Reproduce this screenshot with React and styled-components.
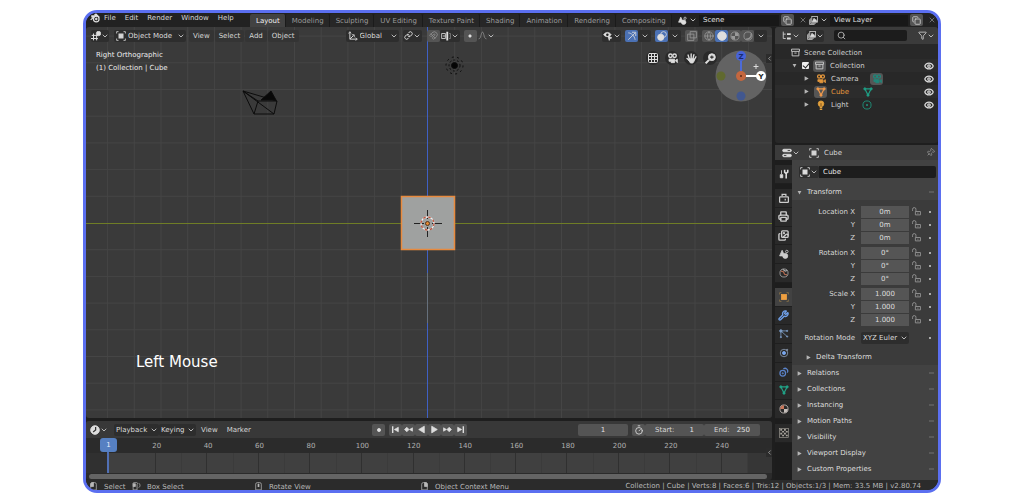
import React from 'react';
import styled, { createGlobalStyle, css } from 'styled-components';
import {
  ChevronDown, ChevronLeft, Search, Filter, Eye, Pin, Wrench, Globe,
  Grid3x3, Link, Magnet, Copy, X, Printer, Images, Timer,
} from 'lucide-react';

const Global = createGlobalStyle`
  * { box-sizing: border-box; }
  body { margin: 0; background: #fff; }
  body, button, input, select {
    font-family: "DejaVu Sans", "Liberation Sans", sans-serif;
    font-size: 7px;
    line-height: 12px;
    color: #d6d6d6;
  }
  button, input, select {
    border: 0; margin: 0; padding: 0; background: none; border-radius: 0;
    appearance: none; outline: none;
  }
  h2, ul { margin: 0; padding: 0; font: inherit; list-style: none; }
  svg { display: block; flex: none; }
`;

/* ---------- icons ---------- */

const shapes = {
  blender: <><path d="M1 11l6-5H3V4.500h7L8 2.500 9.500 1.500 15 7" strokeWidth="2" /><circle cx="10" cy="9.500" r="4.500" strokeWidth="2" /><circle cx="10" cy="9.500" r="1.500" fill="currentColor" /></>,
  view3d: <><path d="M1 7h10M0 12h11M4 4v11M9 7v8" strokeWidth="1.600" /><circle cx="12" cy="4" r="3.500" fill="currentColor" /></>,
  object: <><rect x="5" y="5" width="6" height="6" fill="currentColor" strokeWidth="2" /><path d="M1 4V1h3M12 1h3v3M15 12v3h-3M4 15H1v-3" /></>,
  axes: <><path d="M3 2v11h11M3 13l6-6" strokeWidth="1.600" /><path d="M1 4l2-3 2 3M12 11l3 2-3 2M6 6h4v4" /></>,
  snap: <><path d="M1 4h6v8H1zM3 8h4" /><path d="M10 1v14" strokeWidth="3" /><path d="M13 4h2v8h-2" opacity=".5" /></>,
  dot: <circle cx="8" cy="8" r="2.500" fill="currentColor" />,
  curve: <path d="M1 14c5 0 4-12 7-12s2 12 7 12" />,
  visibility: <><path d="M1 6c3-5 9-5 12 0-3 4-9 4-12 0z" fill="currentColor" /><circle cx="7" cy="6" r="2" fill="#222" stroke="none" /><path d="M8 8l2 7 1-3 3-1z" fill="currentColor" /></>,
  gizmo: <><path d="M2 14L13 3M8 2h6v6" /><path d="M2 3c5 0 10 5 11 11" /></>,
  overlay: <><circle cx="6" cy="10" r="5" fill="currentColor" /><circle cx="10.500" cy="5.500" r="4.500" /></>,
  xray: <><path d="M1 5h10v10H1z" /><path d="M5 1h10v10H5z" /></>,
  solid: <circle cx="8" cy="8" r="7" fill="currentColor" />,
  material: <><circle cx="8" cy="8" r="6.500" /><path d="M8 2v6h6a6 6 0 00-6-6zM2 8h6v6a6 6 0 01-6-6z" fill="currentColor" stroke="none" /></>,
  rendered: <><circle cx="8" cy="8" r="6.500" /><path d="M13 4c1 6-3 9-8 9" strokeWidth="2" /></>,
  camera: <><circle cx="5" cy="4" r="2.500" strokeWidth="2" /><circle cx="11" cy="4" r="2.500" strokeWidth="2" /><path d="M3 9h8v5H6v-2H3zM12 11l3-2v5z" fill="currentColor" /></>,
  hand: <><path d="M5 9L3 3M7.500 8V1.500M10 8.500L11.500 2.500M12 10l2.500-4.500M5 11L1.500 8" strokeWidth="2" strokeLinecap="round" /><path d="M4.500 8.500h7.500v3l-2 3H6.500l-2.500-4z" fill="currentColor" /></>,
  zoom: <><circle cx="10" cy="6" r="5" fill="currentColor" /><path d="M6 10l-5 5" strokeWidth="3" /><path d="M10 3.500v5M7.500 6h5" stroke="#2a2a2a" strokeWidth="1.600" /></>,
  unlocked: <><path d="M1 7V4a3 3 0 016 0v4" strokeWidth="1.600" /><path d="M6 8h9v6H6zM10.500 10v2" strokeWidth="1.600" /></>,
  scene: <><path d="M5 2l4 9H1z" fill="currentColor" /><circle cx="10" cy="11" r="4" fill="currentColor" /><circle cx="12.500" cy="4" r="2" /></>,
  layers: <><path d="M1 6v9h9M3 4v9h9" /><rect x="5" y="1" width="10" height="10" /><path d="M6 10l3-6 2 3 1-1 2 4z" fill="currentColor" /></>,
  tree: <><path d="M2 1v11h4M2 5h4" /><path d="M8 5h6M8 12h6" strokeWidth="3" /></>,
  collection: <><path d="M1 2h14v4H1zM2 6v8h12V6M6 9h4" strokeWidth="1.600" /></>,
  props: <><rect x="1" y="2" width="14" height="4" rx="2" fill="currentColor" /><rect x="1" y="10" width="14" height="4" rx="2" fill="currentColor" /><path d="M9 4h4M3 12h4" stroke="#333" /></>,
  mesh: <><path d="M3 3h10L8 13z" strokeWidth="1.800" /><g fill="currentColor"><circle cx="3" cy="3" r="1.800" /><circle cx="13" cy="3" r="1.800" /><circle cx="8" cy="13" r="1.800" /></g></>,
  bulb: <><circle cx="8" cy="6" r="4.500" fill="currentColor" /><path d="M6 12h4M6 15h4" strokeWidth="2" /><path d="M8 5v5" stroke="#6b4415" /></>,
  lightData: <><circle cx="8" cy="8" r="6.500" /><circle cx="8" cy="8" r="1" fill="currentColor" /></>,
  tool: <><path d="M4 2v6M2 9h4v5H2z" fill="currentColor" /><path d="M9 1v4l2 2 3-2V1M11.500 7v8" strokeWidth="2.500" /></>,
  render: <><rect x="1" y="6" width="14" height="9" rx="1" strokeWidth="2" /><path d="M5 5V2h6v3M10 9v3" strokeWidth="2" /></>,
  world: <><circle cx="8" cy="8" r="6.500" /><path d="M3 5l4 1 2 4 4 1" stroke="#b06a50" strokeWidth="2" /><path d="M6 2l4 3 3-1" strokeWidth="2" /></>,
  objectTab: <><rect x="4" y="4" width="8" height="8" fill="#f0a040" stroke="#f0a040" /><path d="M1 4V1h3M12 1h3v3M15 12v3h-3M4 15H1v-3" stroke="#8c7448" /></>,
  particles: <><path d="M3 3l10 9M3 3h10M3 3v10" /><g fill="currentColor"><circle cx="3" cy="3" r="2" /><circle cx="13" cy="3" r="1" /><circle cx="3" cy="13" r="1" /><circle cx="13" cy="12" r="1" /></g></>,
  physics: <><circle cx="8" cy="8" r="6" /><circle cx="8" cy="8" r="2.500" fill="#7aa7ee" stroke="#7aa7ee" /><circle cx="13" cy="3" r="1" fill="currentColor" /></>,
  constraint: <><circle cx="6" cy="10" r="4.500" strokeWidth="2" /><circle cx="6" cy="10" r="1" fill="currentColor" /><path d="M7 3c4-3 9 2 6 6" strokeWidth="2" /></>,
  matTab: <><circle cx="8" cy="8" r="6.500" /><path d="M8 8h6a6 6 0 01-6 6z" fill="currentColor" stroke="none" /><path d="M8 2v6H2a6 6 0 016-6z" fill="#c9775b" stroke="none" /></>,
  texture: <><rect x="1" y="1" width="14" height="14" strokeWidth="1" /><path d="M2 3h12M2 9h12" strokeWidth="2.500" strokeDasharray="3 3" /><path d="M5 6h9M5 12h9" strokeWidth="2.500" strokeDasharray="3 3" /></>,
  clock: <><circle cx="8" cy="8" r="7" fill="currentColor" /><path d="M9 3v5l-4 3" stroke="#333" strokeWidth="2" /></>,
  first: <><path d="M3 2v12" strokeWidth="2.500" /><path d="M13 4v8L6 8z" fill="currentColor" /></>,
  prevKey: <path d="M5 4l4 4-4 4-4-4zM15 5v6l-5-3z" fill="currentColor" />,
  back: <path d="M13 2v12L3 8z" fill="currentColor" />,
  play: <path d="M3 2v12l10-6z" fill="currentColor" />,
  nextKey: <path d="M11 4l4 4-4 4-4-4zM1 5v6l5-3z" fill="currentColor" />,
  last: <><path d="M13 2v12" strokeWidth="2.500" /><path d="M3 4v8l7-4z" fill="currentColor" /></>,
  mouseL: <><path d="M3 14V4a3 3 0 013-3h4a3 3 0 013 3v10z" /><path d="M3 8V4a3 3 0 013-3h2v7z" fill="currentColor" /></>,
  mouseM: <><path d="M3 14V4a3 3 0 013-3h4a3 3 0 013 3v10z" /><path d="M8 3v6" strokeWidth="3" /></>,
  mouseR: <><path d="M3 14V4a3 3 0 013-3h4a3 3 0 013 3v10z" /><path d="M8 1h2a3 3 0 013 3v4H8z" fill="currentColor" /></>,
  drag: <><path d="M2 14V4a2 2 0 012-3h2a2 2 0 013 3v10z" /><path d="M2 8V3h4v5z" fill="currentColor" /><path d="M12 2c3 2 3 6 0 8" /></>,
  opened: <path d="M2 3h12l-6 11z" fill="currentColor" stroke="none" />,
  closed: <path d="M2 1v14l13-7z" fill="currentColor" stroke="none" />,
};

const Glyph = ({ name, size = 10, color = 'currentColor' }) => (
  <svg width={size} height={size} viewBox="0 0 16 16" fill="none" stroke="currentColor"
    strokeWidth="1.3" color={color} aria-hidden="true">{shapes[name]}</svg>
);
const Chevron = () => <ChevronDown size={8} strokeWidth={3} color="#b8b8b8" />;

/* ---------- shell ---------- */

const Page = styled.main`
  min-height: 100vh;
  padding: 10px 83px;
  display: flex;
`;
const Frame = styled.div`
  flex: 1;
  min-width: 0;
  display: flex;
  flex-direction: column;
  border: 3px solid #5b6ff0;
  border-radius: 14px;
  background: #1e1e1e;
  overflow: hidden;
`;
const Row = styled.div`
  display: flex;
  align-items: center;
  gap: ${(p) => p.$gap || 0}px;
  margin-left: ${(p) => (p.$end ? 'auto' : `${p.$before || 0}px`)};
`;
const TopBar = styled.header`
  display: flex;
  height: 14px;
  padding-left: 4px;
  background: #222;
  white-space: nowrap;
`;
const MenuBar = styled.nav`
  display: flex;
  align-items: center;
  flex: none;
  width: 160px;
  height: 10px;
  gap: 4px;
`;
const MenuButton = styled.button`
  flex: none;
  white-space: nowrap;
  color: #d6d6d6;
  ${(p) => p.$boxed && css`
    padding: 0 4px;
    border-radius: 2px;
    background: #343434;
  `}
`;
const Tabs = styled.div`
  display: flex;
  align-items: stretch;
  padding-top: 1px;
`;
const Tab = styled.button`
  padding: 0 5px 0 6px;
  border-right: 1px solid #1b1b1b;
  border-radius: 2px 2px 0 0;
  background: ${(p) => (p.$active ? '#424242' : '#272727')};
  color: ${(p) => (p.$active ? '#f0f0f0' : '#9b9b9b')};
`;
const DataPicker = styled.div`
  display: flex;
  align-items: center;
  height: 10px;
  gap: 2px;
  width: ${(p) => p.$width}px;
`;
const DataName = styled.input`
  flex: 1;
  min-width: 0;
  height: 11px;
  padding-left: 4px;
  background: #181818;
  color: #e0e0e0;
`;
const IconButton = styled.button`
  display: flex;
  align-items: center;
  justify-content: center;
  height: 12px;
  min-width: ${(p) => p.$width || 13}px;
  border-radius: 2px;
  color: ${(p) => (p.$dim ? '#999' : '#dedede')};
  background: ${(p) => ({ on: '#4b71b4', raised: '#545454', dark: '#2e2e2e' }[p.$tone] || 'transparent')};
`;
const Body = styled.div`
  flex: 1;
  display: flex;
  gap: 3px;
`;
const Work = styled.div`
  flex: 1;
  min-width: 0;
  display: flex;
  flex-direction: column;
  gap: 3px;
`;
const Side = styled.aside`
  width: 163px;
  display: flex;
  flex-direction: column;
  gap: 2px;
`;

/* ---------- 3D viewport ---------- */

const Viewport = styled.section`
  position: relative;
  flex: 1;
  min-height: 300px;
  background: #3a3a3a;
  border-radius: 3px;
  overflow: hidden;
`;
const Scene = styled.svg`
  position: absolute;
  inset: 0;
  width: 100%;
  height: 100%;
`;
const ViewHeader = styled.div`
  position: relative;
  display: flex;
  align-items: center;
  height: 17px;
  padding: 0 5px;
  white-space: nowrap;
`;
const PickerBox = styled.label`
  display: flex;
  align-items: center;
  gap: ${(p) => p.$gap}px;
  width: ${(p) => p.$width}px;
  height: 12px;
  padding: 0 1px 0 2px;
  border-radius: 2px;
  background: #2d2d2d;
`;
const PickerSelect = styled.select`
  flex: 1;
  min-width: 0;
  height: 12px;
  color: #dcdcdc;
`;
const ViewInfo = styled.div`
  position: relative;
  padding: 5px 10px;
  line-height: 13px;
  color: #ececec;
`;
const NavTools = styled.div`
  position: absolute;
  top: 24px;
  right: 55px;
  display: flex;
  gap: 5px;
`;
const NavButton = styled.button`
  display: flex;
  align-items: center;
  justify-content: center;
  width: 14px;
  height: 14px;
  border-radius: 50%;
  background: #2a2a2a;
  color: #ddd;
`;
const BallHolder = styled.div`
  position: absolute;
  top: 23px;
  right: 5px;
`;
const KeyHint = styled.div`
  position: absolute;
  left: 50px;
  bottom: 46px;
  font-size: 15px;
  line-height: 20px;
  color: #fff;
`;
const EdgeHandle = styled.button`
  position: absolute;
  right: 0;
  top: ${(p) => p.$top}px;
  width: 6px;
  height: 9px;
  background: #2c2c2c;
  display: flex;
  align-items: center;
`;

const steps = Array.from({ length: 27 }, (_, i) => (i - 13) * 26.7).filter((v) => v !== 0);

const ViewportScene = () => (
  <Scene viewBox="-342 -196 686 391" preserveAspectRatio="xMidYMid slice" fill="none">
    <g stroke="#454545">
      {steps.map((x) => <path key={x} d={`M${x} -400V400`} />)}
      {steps.map((y) => <path key={y} d={`M-700 ${y}H700`} />)}
    </g>
    <path d="M-700 .5H700" stroke="#6f7d26" />
    <path d="M-.5 -400V400" stroke="#3f60c4" />
    <path d="M-.5 50V100" stroke="#66707c" />
    <rect x="-26.500" y="-26.500" width="53" height="53" fill="#9fa1a0" stroke="#e88a3e" strokeWidth="1.500" />
    <path d="M-14 .5H-4M4 .5H14M-.5 -13V-4M-.5 4V14" stroke="#222" />
    <circle cx="-.5" cy=".5" r="6.500" stroke="#eee" strokeWidth="1.300" />
    <circle cx="-.5" cy=".5" r="6.500" stroke="#c0533c" strokeWidth="1.300" strokeDasharray="2.500 2.600" />
    <circle cx="-.5" cy=".5" r="2" fill="#e58a35" stroke="#54351c" />
    <g stroke="#0c0c0c">
      <path d="M-185 -132L-174 -109H-154L-151 -122H-170L-174 -109M-185 -132L-170 -122M-185 -132L-154 -109M-185 -132L-151 -122" />
      <path d="M-167 -123H-152L-157 -132Z" fill="#080808" />
      <circle cx="26.500" cy="-157.500" r="3" fill="#050505" />
      <circle cx="26.500" cy="-157.500" r="5.500" strokeDasharray="2 2" />
      <circle cx="26.500" cy="-157.500" r="8.500" strokeDasharray="2 3.300" />
    </g>
  </Scene>
);

const AxisBall = () => (
  <svg width="52" height="52" viewBox="-26 -26 52 52" role="img" aria-label="View axes">
    <circle r="25.500" fill="#636363" />
    <path d="M0 -15V0" stroke="#4d6bd6" strokeWidth="2" />
    <path d="M5 0H16" stroke="#fff" strokeWidth="2" />
    <circle cx="-20" r="4.500" fill="#60692f" />
    <circle cy="20" r="4.500" fill="#41578f" />
    <circle cy="-20" r="5" fill="#4763d8" />
    <circle r="5" fill="#c4673f" />
    <circle cx="20" r="5" fill="#fff" />
    <circle r="1" fill="#5a2a18" />
    <path d="M15 -12v5M12.500 -9.500h5" stroke="#ddd" />
    <g fontSize="7" fontWeight="bold" textAnchor="middle">
      <text y="-17" fill="#182a70">Z</text>
      <text x="20" y="3" fill="#222">Y</text>
    </g>
  </svg>
);

const Picker = ({ icon, label, value, width }) => (
  <PickerBox $width={width} $gap={icon ? 2 : 0}>
    {icon && <Glyph name={icon} size={10} />}
    <PickerSelect aria-label={label} defaultValue={value}><option>{value}</option></PickerSelect>
    <Chevron />
  </PickerBox>
);

/* ---------- timeline ---------- */

const Timeline = styled.section`
  position: relative;
  background: #2b2b2b;
  border-radius: 3px;
  overflow: hidden;
`;
const TimeHeader = styled.div`
  display: flex;
  align-items: center;
  height: 17px;
  padding: 0 12px 0 3px;
  background: #383838;
  white-space: nowrap;
`;
const TimeGrid = styled.div`
  display: grid;
  grid-template-columns: repeat(12, 1fr);
  padding: 0 24px 0 45px;
  height: ${(p) => p.$height}px;
  text-align: center;
  line-height: 17px;
  color: #b0b0b0;
  ${(p) => p.$track && css`
    background: linear-gradient(90deg, #303030 22px, #404040 22px calc(100% - 25px), #222 calc(100% - 25px) calc(100% - 24px), #363636 calc(100% - 24px));
  `}
`;
const Beat = styled.div`
  background: linear-gradient(90deg, transparent calc(50% - 1px), #303030 calc(50% - 1px) 50%, transparent 50%);
  border-right: 1px solid #3b3b3b;
`;
const Playhead = styled.div`
  position: absolute;
  left: 14px;
  top: 17px;
  width: 17px;
  height: 14px;
  border-radius: 3px;
  background: #5680c2;
  color: #e8eefc;
  text-align: center;
  line-height: 15px;
  &::after {
    content: '';
    position: absolute;
    left: 7px;
    top: 14px;
    width: 2px;
    height: 21px;
    background: #5170b5;
  }
`;
const ScrollBar = styled.div`
  height: 5px;
  margin: 1px 5px 1px 3px;
  border-radius: 3px;
  background: #646464;
`;
const NumberField = styled.label`
  display: flex;
  align-items: center;
  width: ${(p) => p.$width}px;
  height: 12px;
  padding: 0 10px;
  border-radius: 2px;
  background: #545454;
`;
const NumberInput = styled.input`
  flex: 1;
  min-width: 0;
  width: 100%;
  text-align: ${(p) => p.$align || 'right'};
  color: #e2e2e2;
`;

/* ---------- outliner ---------- */

const Outliner = styled.section`
  height: 116px;
  background: #282828;
  border-radius: 3px;
  overflow: hidden;
`;
const PanelHeader = styled.div`
  display: flex;
  align-items: center;
  gap: 6px;
  height: ${(p) => p.$height}px;
  padding: 0 3px 0 7px;
  background: #3b3b3b;
`;
const SearchBox = styled.label`
  display: flex;
  align-items: center;
  flex: 1;
  height: 11px;
  margin: 0 4px;
  padding: 0 3px;
  border-radius: 2px;
  background: #1c1c1c;
`;
const Tree = styled.ul`
  padding-top: 2px;
`;
const TreeRow = styled.li`
  display: flex;
  align-items: center;
  gap: 4px;
  height: 13px;
  padding: 0 3px 0 ${(p) => p.$indent}px;
  background: ${(p) => (p.$alt ? '#2c2c2c' : 'transparent')};
  color: ${(p) => (p.$selected ? '#e2963c' : '#cfcfcf')};
`;
const Twist = styled.button`
  display: flex;
  width: 6px;
  color: #b5b5b5;
`;
const IconPlate = styled.span`
  display: flex;
  align-items: center;
  justify-content: center;
  width: 13px;
  height: 12px;
  border-radius: 3px;
  background: ${(p) => (p.$lit ? '#555' : 'transparent')};
`;
const Check = styled.input`
  width: 7px;
  height: 7px;
  border-radius: 1px;
  background: #eee;
  position: relative;
  &:checked::after {
    content: '';
    position: absolute;
    left: 2px;
    top: 0;
    width: 3px;
    height: 5px;
    border: solid #222;
    border-width: 0 1px 1px 0;
    transform: rotate(40deg);
  }
`;
const Push = styled.div`
  margin-left: auto;
`;

/* ---------- properties ---------- */

const Properties = styled.section`
  flex: 1;
  display: flex;
  flex-direction: column;
  background: #383838;
`;
const PropsBody = styled.div`
  flex: 1;
  display: flex;
`;
const TabRail = styled.nav`
  width: 17px;
  padding-top: 5px;
  display: flex;
  flex-direction: column;
  gap: 5px;
  background: #1d1d1d;
`;
const RailGroup = styled.div`
  display: flex;
  flex-direction: column;
  height: ${(p) => p.$height}px;
`;
const RailTab = styled.button`
  flex: 1;
  display: flex;
  align-items: center;
  justify-content: center;
  background: ${(p) => (p.$active ? '#424242' : '#292929')};
  border-bottom: 1px solid #1f1f1f;
`;
const PropsMain = styled.div`
  flex: 1;
  min-width: 0;
  background: #424242;
`;
const NameRow = styled.div`
  display: flex;
  height: 24px;
  align-items: center;
  padding: 0 2px 0 7px;
`;
const NameInput = styled.input`
  flex: 1;
  min-width: 0;
  height: 12px;
  padding-left: 4px;
  border-radius: 0 2px 2px 0;
  background: #1d1d1d;
  color: #e6e6e6;
`;
const SectionHead = styled.h2`
  display: flex;
  align-items: center;
  height: 16px;
  padding: 0 4px 0 ${(p) => (p.$sub ? 14 : 5)}px;
  color: #dedede;
`;
const SectionToggle = styled.button`
  display: flex;
  align-items: center;
  gap: 4px;
  color: inherit;
`;
const Grip = styled.span`
  margin-left: auto;
  width: 5px;
  height: 2px;
  background: #5a5a5a;
`;
const PropPanel = styled.div`
  background: #3b3b3b;
  padding-top: 5px;
  display: flex;
  flex-direction: column;
  gap: 5px;
`;
const VectorList = styled.div`
  display: flex;
  flex-direction: column;
  gap: 2px;
`;
const PropRow = styled.div`
  display: grid;
  grid-template-columns: 1fr 48px 15px 12px;
  align-items: center;
  height: 13px;
  margin-right: 2px;
`;
const PropLabel = styled.label`
  text-align: right;
  padding-right: 6px;
  white-space: nowrap;
`;
const PropValue = styled.input`
  width: 100%;
  height: 12px;
  text-align: center;
  background: #555;
  color: #dedede;
`;
const Center = styled.span`
  display: flex;
  justify-content: center;
`;
const Dot = styled.span`
  justify-self: center;
  width: 2px;
  height: 2px;
  border-radius: 50%;
  background: #d0d0d0;
`;

const vectors = [
  ['Location', '0m'],
  ['Rotation', '0°'],
  ['Scale', '1.000'],
];
const rail = [
  [19, [['tool', '#ddd']]],
  [94, [['render', '#ccc'], ['printer', '#ccc'], ['images', '#ccc'], ['scene', '#ccc'], ['world', '#aaa']]],
  [131, [['objectTab', '#f0a040'], ['wrench', '#6f9fe8'], ['particles', '#7d9cc4'], ['physics', '#8d9bb0'], ['constraint', '#5b83c8'], ['mesh', '#22a387'], ['matTab', '#c8c0bc']]],
  [19, [['texture', '#a8a49c']]],
];
const railLucide = { printer: Printer, images: Images, wrench: Wrench };
const RailIcon = ({ name, color }) => {
  const L = railLucide[name];
  return L ? <L size={11} strokeWidth={3} color={color} /> : <Glyph name={name} size={10} color={color} />;
};

/* ---------- status bar ---------- */

const StatusBar = styled.footer`
  display: flex;
  height: 10px;
  padding: 0 17px 0 3px;
  overflow: hidden;
  background: #2b2b2b;
  white-space: nowrap;
  color: #b9b9b9;
`;
const Hint = styled.span`
  display: flex;
  align-items: center;
  gap: 6px;
  height: 13px;
  width: ${(p) => p.$width}px;
`;
const Stats = styled.span`
  margin-left: auto;
  line-height: 13px;
`;

const workspaces = ['Layout', 'Modeling', 'Sculpting', 'UV Editing', 'Texture Paint', 'Shading', 'Animation', 'Rendering', 'Compositing'];
const sections = ['Relations', 'Collections', 'Instancing', 'Motion Paths', 'Visibility', 'Viewport Display', 'Custom Properties'];
const transport = ['first', 'prevKey', 'back', 'play', 'nextKey', 'last'];

const EyeToggle = () => (
  <Push><IconButton aria-label="Toggle visibility"><Eye size={10} strokeWidth={3} color="#d8d8d8" /></IconButton></Push>
);
const Section = ({ title, open, sub, grip = true }) => (
  <SectionHead $sub={sub}>
    <SectionToggle aria-expanded={!!open}><Twist as="span"><Glyph name={open ? 'opened' : 'closed'} size={5} /></Twist>{title}</SectionToggle>
    {grip && <Grip />}
  </SectionHead>
);
const Expand = ({ open }) => (
  <Twist aria-label={open ? 'Collapse' : 'Expand'}><Glyph name={open ? 'opened' : 'closed'} size={5} /></Twist>
);

export default function App() {
  return (
    <Page>
      <Global />
      <Frame>
        <TopBar>
          <MenuBar>
            <Glyph name="blender" size={10} color="#ddd" />
            <Row $gap={9}>
              {['File', 'Edit', 'Render', 'Window', 'Help'].map((m) => <MenuButton key={m}>{m}</MenuButton>)}
            </Row>
          </MenuBar>
          <Tabs>
            {workspaces.map((w, i) => <Tab key={w} $active={i === 0}>{w}</Tab>)}
          </Tabs>
          <Row $end>
            {[['scene', 'Scene', 131], ['layers', 'View Layer', 129]].map(([icon, name, width]) => (
              <DataPicker key={name} $width={width}>
                <Glyph name={icon} size={9} color="#ddd" />
                <Chevron />
                <DataName aria-label={name} defaultValue={name} />
                <IconButton $tone="raised" aria-label="New"><Copy size={9} /></IconButton>
                <IconButton $dim aria-label="Remove"><X size={8} /></IconButton>
              </DataPicker>
            ))}
          </Row>
        </TopBar>

        <Body>
          <Work>
            <Viewport>
              <ViewportScene />
              <ViewHeader>
                <IconButton $tone="dark" $width={18} aria-label="Editor type"><Glyph name="view3d" /><Chevron /></IconButton>
                <Row $before={5}><Picker icon="object" label="Mode" value="Object Mode" width={72} /></Row>
                <Row $gap={1} $before={3}>
                  {['View', 'Select', 'Add', 'Object'].map((m) => <MenuButton key={m} $boxed>{m}</MenuButton>)}
                </Row>
                <Row $before={47}><Picker icon="axes" label="Orientation" value="Global" width={53} /></Row>
                <Row $before={4}>
                  <IconButton $tone="dark" $width={19} aria-label="Pivot"><Link size={9} strokeWidth={2.5} /><Chevron /></IconButton>
                </Row>
                <Row $before={5}>
                  <IconButton $tone="raised" $dim aria-label="Snap"><Magnet size={9} /></IconButton>
                  <IconButton $tone="dark" $width={20} aria-label="Snap to"><Glyph name="snap" /><Chevron /></IconButton>
                </Row>
                <Row $before={4}>
                  <IconButton $tone="raised" aria-label="Proportional editing"><Glyph name="dot" size={8} /></IconButton>
                  <IconButton $dim $width={20} aria-label="Falloff"><Glyph name="curve" size={9} /><Chevron /></IconButton>
                </Row>
                <Row $end $gap={4}>
                  <IconButton $tone="dark" $width={19} aria-label="Object visibility"><Glyph name="visibility" /><Chevron /></IconButton>
                  <Row>
                    <IconButton $tone="on" aria-label="Gizmos"><Glyph name="gizmo" /></IconButton>
                    <IconButton $tone="dark" aria-label="Gizmo options"><Chevron /></IconButton>
                  </Row>
                  <Row>
                    <IconButton $tone="on" aria-label="Overlays"><Glyph name="overlay" /></IconButton>
                    <IconButton $tone="dark" aria-label="Overlay options"><Chevron /></IconButton>
                  </Row>
                  <IconButton $tone="raised" $dim aria-label="X-ray"><Glyph name="xray" /></IconButton>
                  <Row>
                    <IconButton $tone="raised" $dim aria-label="Wireframe"><Globe size={10} /></IconButton>
                    <IconButton $tone="on" aria-label="Solid"><Glyph name="solid" /></IconButton>
                    <IconButton $tone="raised" $dim aria-label="Material preview"><Glyph name="material" /></IconButton>
                    <IconButton $tone="raised" $dim aria-label="Rendered"><Glyph name="rendered" /></IconButton>
                    <IconButton $tone="dark" aria-label="Shading options"><Chevron /></IconButton>
                  </Row>
                </Row>
              </ViewHeader>
              <ViewInfo>
                <div>Right Orthographic</div>
                <div>(1) Collection | Cube</div>
              </ViewInfo>
              <NavTools>
                <NavButton aria-label="Toggle orthographic"><Grid3x3 size={12} /></NavButton>
                <NavButton aria-label="Camera view"><Glyph name="camera" size={11} /></NavButton>
                <NavButton aria-label="Pan"><Glyph name="hand" size={11} /></NavButton>
                <NavButton aria-label="Zoom"><Glyph name="zoom" size={11} /></NavButton>
              </NavTools>
              <BallHolder><AxisBall /></BallHolder>
              <EdgeHandle $top={27} aria-label="Open sidebar"><ChevronLeft size={7} /></EdgeHandle>
              <KeyHint>Left Mouse</KeyHint>
            </Viewport>

            <Timeline>
              <TimeHeader>
                <IconButton $width={20} aria-label="Editor type"><Glyph name="clock" /><Chevron /></IconButton>
                <Row $before={5}>
                  <Picker label="Playback" value="Playback" width={45} />
                  <Picker label="Keying" value="Keying" width={37} />
                </Row>
                <Row $gap={9} $before={5}>
                  <MenuButton>View</MenuButton>
                  <MenuButton>Marker</MenuButton>
                </Row>
                <Row $end $gap={4}>
                  <IconButton $tone="raised" aria-label="Auto keying"><Glyph name="dot" /></IconButton>
                  <Row>
                    {transport.map((t) => (
                      <IconButton key={t} $tone="raised" aria-label={t}><Glyph name={t} size={9} /></IconButton>
                    ))}
                  </Row>
                </Row>
                <Row $gap={4} $before={111}>
                  <NumberField $width={50}><NumberInput aria-label="Current frame" $align="center" defaultValue="1" /></NumberField>
                  <Row>
                    <IconButton $tone="raised" aria-label="Preview range"><Timer size={10} /></IconButton>
                    <NumberField $width={59}>Start:<NumberInput defaultValue="1" /></NumberField>
                    <NumberField $width={56}>End:<NumberInput defaultValue="250" /></NumberField>
                  </Row>
                </Row>
              </TimeHeader>
              <TimeGrid $height={15}>
                {Array.from({ length: 12 }, (_, i) => <div key={i}>{(i + 1) * 20}</div>)}
              </TimeGrid>
              <TimeGrid $height={20} $track>
                {Array.from({ length: 12 }, (_, i) => <Beat key={i} />)}
              </TimeGrid>
              <ScrollBar />
              <Playhead>1</Playhead>
              <EdgeHandle $top={27} aria-label="Open panel"><ChevronLeft size={7} /></EdgeHandle>
            </Timeline>
          </Work>

          <Side>
            <Outliner>
              <PanelHeader $height={17}>
                <IconButton $width={18} aria-label="Editor type"><Glyph name="tree" /><Chevron /></IconButton>
                <IconButton $tone="dark" $width={18} aria-label="Display mode"><Glyph name="layers" size={9} /><Chevron /></IconButton>
                <SearchBox><Search size={9} color="#ccc" /><NumberInput $align="left" aria-label="Search" /></SearchBox>
                <IconButton $width={18} aria-label="Filter"><Filter size={9} /><Chevron /></IconButton>
              </PanelHeader>
              <Tree>
                <TreeRow $indent={16}><Glyph name="collection" size={9} />Scene Collection</TreeRow>
                <TreeRow $indent={17} $alt>
                  <Expand open />
                  <Check type="checkbox" defaultChecked aria-label="Collection" />
                  <IconPlate $lit><Glyph name="collection" size={9} /></IconPlate>Collection
                  <EyeToggle />
                </TreeRow>
                <TreeRow $indent={29}>
                  <Expand />
                  <IconPlate><Glyph name="camera" color="#e2963c" /></IconPlate>Camera
                  <Row $before={8}><IconPlate $lit><Glyph name="camera" color="#20877a" /></IconPlate></Row>
                  <EyeToggle />
                </TreeRow>
                <TreeRow $indent={29} $alt $selected>
                  <Expand />
                  <IconPlate $lit><Glyph name="mesh" color="#f09a4c" /></IconPlate>Cube
                  <Row $before={8}><IconPlate><Glyph name="mesh" color="#1f9e85" /></IconPlate></Row>
                  <EyeToggle />
                </TreeRow>
                <TreeRow $indent={29}>
                  <Expand />
                  <IconPlate><Glyph name="bulb" color="#e2a03c" /></IconPlate>Light
                  <Row $before={8}><IconPlate><Glyph name="lightData" color="#1f9e85" /></IconPlate></Row>
                  <EyeToggle />
                </TreeRow>
              </Tree>
            </Outliner>

            <Properties>
              <PanelHeader $height={15}>
                <IconButton $width={18} aria-label="Editor type"><Glyph name="props" /><Chevron /></IconButton>
                <Row $gap={5} $before={3}><Glyph name="object" />Cube</Row>
                <Push><Pin size={9} color="#999" transform="rotate(45)" /></Push>
              </PanelHeader>
              <PropsBody>
                <TabRail>
                  {rail.map(([height, tabs]) => (
                    <RailGroup key={tabs[0][0]} $height={height}>
                      {tabs.map(([name, color]) => (
                        <RailTab key={name} $active={name === 'objectTab'} aria-label={name}>
                          <RailIcon name={name} color={color} />
                        </RailTab>
                      ))}
                    </RailGroup>
                  ))}
                </TabRail>
                <PropsMain>
                  <NameRow>
                    <IconButton $tone="dark" $width={20} aria-label="Browse object"><Glyph name="object" /><Chevron /></IconButton>
                    <NameInput aria-label="Object name" defaultValue="Cube" />
                  </NameRow>
                  <Section title="Transform" open />
                  <PropPanel>
                    <VectorList>
                      {vectors.map(([group, value]) => (
                        <div key={group}>
                          {['X', 'Y', 'Z'].map((axis) => (
                            <PropRow key={axis}>
                              <PropLabel htmlFor={group + axis}>{axis === 'X' ? `${group} X` : axis}</PropLabel>
                              <PropValue id={group + axis} defaultValue={value} />
                              <Center><Glyph name="unlocked" size={9} color="#949494" /></Center>
                              <Dot />
                            </PropRow>
                          ))}
                        </div>
                      ))}
                    </VectorList>
                    <PropRow>
                      <PropLabel as="span">Rotation Mode</PropLabel>
                      <Picker label="Rotation Mode" value="XYZ Euler" width={48} />
                      <span />
                      <Dot />
                    </PropRow>
                    <Section title="Delta Transform" sub grip={false} />
                  </PropPanel>
                  {sections.map((s) => <Section key={s} title={s} />)}
                </PropsMain>
              </PropsBody>
            </Properties>
          </Side>
        </Body>

        <StatusBar>
          <Hint $width={43}><Glyph name="mouseL" size={9} />Select</Hint>
          <Hint $width={122}><Glyph name="drag" size={9} />Box Select</Hint>
          <Hint $width={166}><Glyph name="mouseM" size={9} />Rotate View</Hint>
          <Hint $width={100}><Glyph name="mouseR" size={9} />Object Context Menu</Hint>
          <Stats>Collection | Cube | Verts:8 | Faces:6 | Tris:12 | Objects:1/3 | Mem: 33.5 MB | v2.80.74</Stats>
        </StatusBar>
      </Frame>
    </Page>
  );
}
